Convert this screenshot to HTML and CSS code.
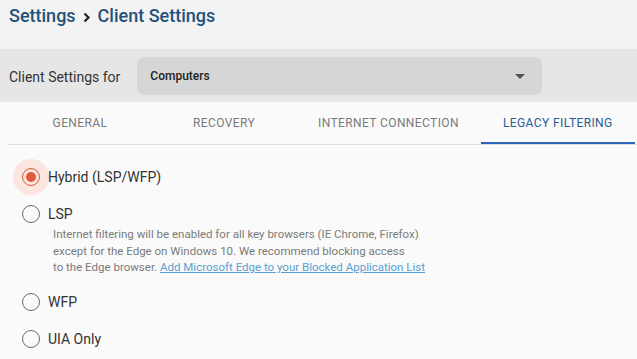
FILE: index.html
```html
<!DOCTYPE html>
<html>
<head>
    <title>Client Settings</title>
    <link rel="stylesheet" href="styles.css">
</head>
<body>
    <div class="header">
        <h1 class="breadcrumb">
            <span>Settings</span>
            <svg class="chevron" width="8" height="11" viewBox="0 0 8 11"><path d="M1.5 1.5 L5.5 5.5 L1.5 9.5" fill="none" stroke="#222" stroke-width="2.2"/></svg>
            <span>Client Settings</span>
        </h1>
    </div>

    <div class="client-bar">
        <label class="client-label">Client Settings for</label>
        <div class="select">
            <span>Computers</span>
            <span class="caret"></span>
        </div>
    </div>

    <div class="tabs">
        <div class="tab">General</div>
        <div class="tab">Recovery</div>
        <div class="tab">Internet Connection</div>
        <div class="tab active">Legacy Filtering</div>
    </div>

    <div class="options">
        <div class="option">
            <span class="radio checked"><span class="ring"></span></span>
            <span class="option-label">Hybrid (LSP/WFP)</span>
        </div>
        <div class="option">
            <span class="radio"><span class="ring"></span></span>
            <span class="option-label">LSP</span>
        </div>
        <p class="description">
            Internet filtering will be enabled for all key browsers (IE Chrome, Firefox)<br>
            except for the Edge on Windows 10. We recommend blocking access<br>
            to the Edge browser. <a href="#">Add Microsoft Edge to your Blocked Application List</a>
        </p>
        <div class="option">
            <span class="radio"><span class="ring"></span></span>
            <span class="option-label">WFP</span>
        </div>
        <div class="option">
            <span class="radio"><span class="ring"></span></span>
            <span class="option-label">UIA Only</span>
        </div>
    </div>
</body>
</html>
```

FILE: styles.css
```css
body {
    margin: 0;
    background-color: #fafafa;
    font-family: Roboto, "Noto Sans", Arial, sans-serif;
    color: #333;
    overflow: hidden;
}

.header {
    background-color: #f3f3f3;
    height: 49px;
    padding: 4px 0 0 9px;
    box-sizing: border-box;
}

.breadcrumb {
    margin: 0;
    display: flex;
    align-items: center;
    gap: 7px;
    font-size: 18px;
    font-weight: 500;
    line-height: 24px;
    color: #22517a;
}

.chevron {
    margin-top: 2px;
}

.client-bar {
    background-color: #e6e6e6;
    height: 53px;
    padding-left: 9px;
    display: flex;
    align-items: center;
}

.client-label {
    font-size: 14px;
    color: #333;
    margin-right: 17px;
    margin-top: 2px;
}

.select {
    width: 405px;
    height: 38px;
    box-sizing: border-box;
    background-color: #d6d6d6;
    border-radius: 7px;
    padding: 0 17px 0 13px;
    display: flex;
    align-items: center;
    justify-content: space-between;
    font-size: 12px;
    font-weight: 500;
    color: #222;
}

.caret {
    width: 0;
    height: 0;
    border-left: 5px solid transparent;
    border-right: 5px solid transparent;
    border-top: 5px solid #555;
    margin-top: 2px;
}

.tabs {
    display: flex;
    margin-left: 8px;
    border-bottom: 1px solid #dcdcdc;
}

.tab {
    min-width: 144px;
    padding: 0 22px;
    box-sizing: border-box;
    height: 42px;
    line-height: 43px;
    text-align: center;
    text-transform: uppercase;
    font-size: 12px;
    letter-spacing: 0.4px;
    color: #7a7a7a;
    border-bottom: 2px solid transparent;
}

.tab.active {
    color: #2a5d96;
    border-bottom-color: #3067b8;
}

.options {
    padding: 13px 0 0 13px;
}

.option {
    display: flex;
    align-items: center;
    height: 37px;
}

.radio {
    width: 36px;
    height: 36px;
    border-radius: 50%;
    display: flex;
    align-items: center;
    justify-content: center;
}

.ring {
    width: 18px;
    height: 18px;
    box-sizing: border-box;
    border: 1.5px solid #6b6b6b;
    border-radius: 50%;
    display: flex;
    align-items: center;
    justify-content: center;
}

.radio.checked {
    background-color: #fbe5df;
}

.radio.checked .ring {
    border-color: #e05a3b;
}

.radio.checked .ring::after {
    content: "";
    width: 10px;
    height: 10px;
    border-radius: 50%;
    background-color: #e05a3b;
}

.option-label {
    font-size: 14px;
    color: #333;
    margin-left: -1px;
}

.description {
    margin: -6px 0 8px 40px;
    font-size: 11.5px;
    line-height: 16.6px;
    color: #7a7a7a;
    white-space: nowrap;
}

.description a {
    color: #5b9fd2;
}
```
